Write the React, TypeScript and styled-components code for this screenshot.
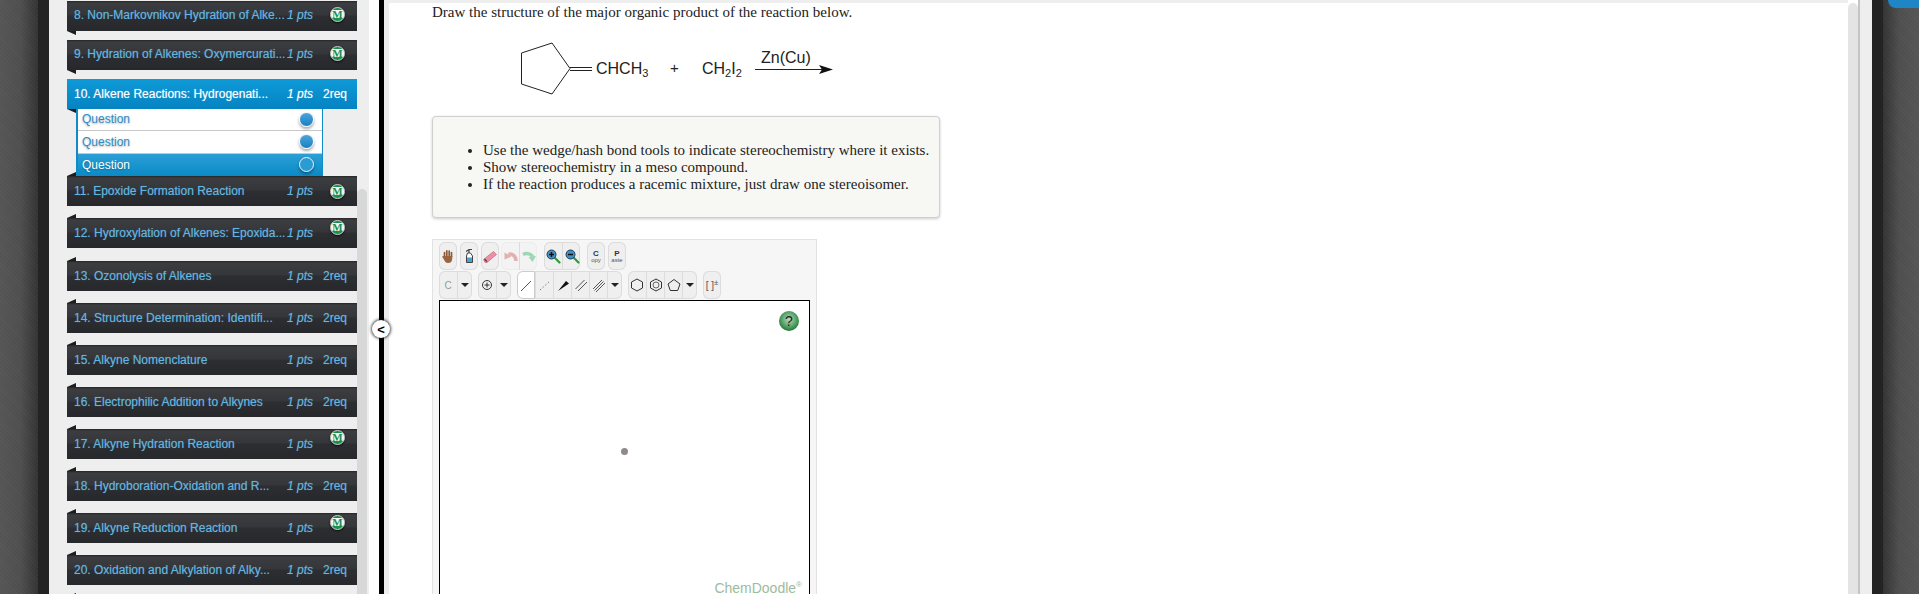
import { ReactNode } from "react"
import styled, { createGlobalStyle } from "styled-components"

const GlobalStyle = createGlobalStyle`
  html, body {
    margin: 0;
    padding: 0;
    height: 594px;
    overflow: hidden;
    background: #fff;
  }
`

interface Topic {
  title: string
  tail: "M" | "req"
  flag?: "top" | "bottom"
  gap?: number
  badgeLift?: number
}

const before: Topic[] = [
  { title: "8. Non-Markovnikov Hydration of Alke...", tail: "M", flag: "bottom", gap: 0, badgeLift: 2 },
  { title: "9. Hydration of Alkenes: Oxymercurati...", tail: "M", flag: "bottom", gap: 9, badgeLift: 2 },
]

const after: Topic[] = [
  { title: "11. Epoxide Formation Reaction", tail: "M", gap: 0, badgeLift: 0 },
  { title: "12. Hydroxylation of Alkenes: Epoxida...", tail: "M", gap: 12, badgeLift: 12 },
  { title: "13. Ozonolysis of Alkenes", tail: "req", gap: 13 },
  { title: "14. Structure Determination: Identifi...", tail: "req", gap: 12 },
  { title: "15. Alkyne Nomenclature", tail: "req", gap: 12 },
  { title: "16. Electrophilic Addition to Alkynes", tail: "req", gap: 12 },
  { title: "17. Alkyne Hydration Reaction", tail: "M", gap: 12, badgeLift: 14 },
  { title: "18. Hydroboration-Oxidation and R...", tail: "req", gap: 12 },
  { title: "19. Alkyne Reduction Reaction", tail: "M", gap: 12, badgeLift: 12 },
  { title: "20. Oxidation and Alkylation of Alky...", tail: "req", gap: 12 },
]

const Page = styled.div`
  display: flex;
  width: 1919px;
  height: 594px;
  overflow: hidden;
  position: relative;
  font-family: "Liberation Sans", Arial, sans-serif;
`

const Texture = styled.div<{ $side: "left" | "right" }>`
  flex: none;
  width: ${(p) => (p.$side === "left" ? 38 : 36)}px;
  position: relative;
  background:
    repeating-linear-gradient(45deg, rgba(255, 255, 255, 0.025) 0 1px, transparent 1px 3px),
    linear-gradient(
      ${(p) => (p.$side === "left" ? "to right" : "to left")},
      #555 0%,
      #4e4e4e 55%,
      #333 100%
    );
`

const DarkEdge = styled.div`
  flex: none;
  width: 11px;
  background: #232323;
`

const Sidebar = styled.aside`
  flex: none;
  width: 320px;
  position: relative;
  background: #eee;
  padding: 1px 12px 0 18px;
  box-sizing: border-box;
  overflow: hidden;
`

const ScrollThumb = styled.div`
  position: absolute;
  left: 308px;
  top: 189px;
  bottom: 0;
  width: 10px;
  background: #d8d8d8;
  border-radius: 5px 5px 0 0;
`

const TopicBar = styled.div<{ $active?: boolean; $gap: number; $flag?: "top" | "bottom" }>`
  position: relative;
  z-index: 1;
  display: flex;
  align-items: center;
  height: 30px;
  margin-top: ${(p) => p.$gap}px;
  padding: 0 0 ${(p) => (p.$flag === "bottom" ? 2 : 0)}px 7px;
  box-sizing: border-box;
  font-size: 12px;
  color: ${(p) => (p.$active ? "#fff" : "#62b6e2")};
  text-shadow: 0 0 1px ${(p) => (p.$active ? "rgba(255,255,255,0.5)" : "rgba(98,182,226,0.5)")};
  background: ${(p) =>
    p.$active
      ? "linear-gradient(#0f9ad8, #0583c1)"
      : "linear-gradient(#242527 0, #3c3d40 2px, #353639 14px, #2d2e31 15px, #27282b 100%)"};

  &::before {
    content: "";
    display: ${(p) => (p.$flag ? "block" : "none")};
    position: absolute;
    left: 0;
    width: 9px;
    height: 4px;
    background: #1d1d1f;
    ${(p) =>
      p.$flag === "top"
        ? "top: -4px; clip-path: polygon(0 100%, 100% 0, 100% 100%);"
        : "bottom: -4px; clip-path: polygon(0 0, 100% 0, 100% 100%);"}
  }
`

const TopicTitle = styled.span`
  flex: none;
  width: 213px;
  white-space: nowrap;
`

const Pts = styled.span`
  flex: none;
  width: 36px;
  font-style: italic;
`

const Req = styled.span`
  flex: none;
`

const SubList = styled.div`
  position: relative;
  margin: 0 34px 0 9px;
  background: #0d8cc6;
  border-left: 2px solid #0d8cc6;
  border-right: 1px solid #0d8cc6;
  &::before {
    content: "";
    position: absolute;
    left: -11px;
    top: 0;
    width: 9px;
    height: 4px;
    background: #1d1d1f;
    clip-path: polygon(0 0, 100% 0, 100% 100%);
  }
  &::after {
    content: "";
    position: absolute;
    left: -11px;
    bottom: 0;
    width: 9px;
    height: 4px;
    background: #1d1d1f;
    clip-path: polygon(0 100%, 100% 0, 100% 100%);
  }
`

const SubRow = styled.div<{ $current?: boolean; $h: number }>`
  display: flex;
  align-items: center;
  justify-content: space-between;
  height: ${(p) => p.$h}px;
  padding: 0 8px 1px 4px;
  box-sizing: border-box;
  font-size: 12px;
  color: ${(p) => (p.$current ? "#fff" : "#2c8fc9")};
  text-shadow: 0 1px 2px rgba(0, 0, 0, 0.3);
  background: ${(p) => (p.$current ? "linear-gradient(#2c9fd6, #0a8ac6)" : "#fff")};
  border-bottom: ${(p) => (p.$current ? "0" : "1px solid #c8c8c8")};
`

const SubDot = styled.span<{ $current?: boolean }>`
  width: 15px;
  height: 15px;
  border-radius: 50%;
  box-sizing: border-box;
  border: 1px solid #eef6fa;
  background: ${(p) => (p.$current ? "#2a9bd3" : "linear-gradient(#4aa5dc, #1a80c4)")};
  box-shadow: 0 2px 3px rgba(0, 0, 0, 0.35);
`

const MBadge = styled.span<{ $lift: number }>`
  flex: none;
  margin-left: 7px;
  margin-bottom: ${(p) => p.$lift}px;
  width: 15px;
  height: 15px;
  border-radius: 50%;
  display: flex;
  align-items: center;
  justify-content: center;
  background: linear-gradient(#1b8a4f 0, #1b8a4f 18%, #f2f7f3 19%, #f2f7f3 76%, #17924f 77%);
  border: 1px solid #cfcfcf;
  box-sizing: border-box;
  box-shadow: 0 1px 2px rgba(0, 0, 0, 0.7);
  font-family: "Liberation Serif", serif;
  font-weight: bold;
  font-size: 11px;
  line-height: 13px;
  color: #1b8a4f;
  text-shadow: none;
`

const Divider = styled.div`
  flex: none;
  width: 20px;
  display: flex;
  background: #fff;
`

const Rule = styled.div`
  flex: none;
  width: 5px;
  margin-left: 10px;
  background: #000;
`

const RuleSide = styled.div`
  flex: none;
  width: 5px;
  background: #eee;
`

const CollapseKnob = styled.div`
  position: absolute;
  left: 372px;
  top: 320px;
  width: 18px;
  height: 18px;
  border-radius: 50%;
  background: #fff;
  box-shadow: 0 0 3px 1px rgba(0, 0, 0, 0.7);
  display: flex;
  align-items: center;
  justify-content: center;
  font-size: 13px;
  font-weight: bold;
  color: #000;
  z-index: 2;
`

const Main = styled.main`
  flex: none;
  width: 1459px;
  border-top: 3px solid #eee;
  box-sizing: border-box;
  background: #fff;
  padding: 0 0 0 43px;
  font-family: "Liberation Serif", "Times New Roman", serif;
  font-size: 15px;
  color: #222;
  overflow: hidden;
`

const Prompt = styled.p`
  margin: 2px 0 0;
  line-height: 15px;
`

const Reaction = styled.svg`
  display: block;
  margin: 17px 0 0 80px;
`

const HintBox = styled.div`
  width: 508px;
  height: 102px;
  margin-top: 11px;
  box-sizing: border-box;
  padding: 25px 8px 0 0;
  background: #f7f8f3;
  border: 1px solid #d0d0d0;
  border-radius: 4px;
  box-shadow: 0 1px 3px rgba(0, 0, 0, 0.2);
`

const HintList = styled.ul`
  margin: 0;
  padding-left: 50px;
  line-height: 17px;
  white-space: nowrap;
`

const Sketcher = styled.div`
  width: 385px;
  height: 360px;
  margin-top: 21px;
  padding: 2px 6px 0 6px;
  box-sizing: border-box;
  background: #f6f6f6;
  border: 1px solid #e2e2e2;
`

const ToolRow = styled.div`
  display: flex;
  height: 29px;
  gap: 6px;
`

const ToolGroup = styled.div<{ $gap?: number; $dim?: boolean }>`
  display: flex;
  height: 28px;
  margin-right: ${(p) => (p.$gap !== undefined ? p.$gap - 6 : 0)}px;
  box-shadow: inset 0 0 0 1px ${(p) => (p.$dim ? "#ececec" : "#dcdcdc")};
  border-radius: 6px;
  background: ${(p) => (p.$dim ? "#f3f3f3" : "#efefef")};
  overflow: hidden;
`

const ToolButton = styled.div<{ $narrow?: boolean; $on?: boolean; $plain?: boolean }>`
  width: ${(p) => (p.$narrow ? 15 : 18)}px;
  display: flex;
  align-items: center;
  justify-content: center;
  box-sizing: border-box;
  background: ${(p) => (p.$on ? "#fff" : "transparent")};
  border: ${(p) => (p.$on ? "1px solid #ccc" : "0")};
  border-radius: ${(p) => (p.$on ? "6px 0 0 6px" : "0")};
  & + & {
    border-left: ${(p) => (p.$plain ? "0" : "1px solid #dcdcdc")};
  }
`

const CopyLabel = styled.span`
  font-family: "Liberation Sans", sans-serif;
  font-size: 6px;
  line-height: 6px;
  color: #555;
  text-align: center;
  b {
    display: block;
    font-size: 8px;
    line-height: 7px;
    color: #333;
  }
`

const CarbonLabel = styled.span`
  font-family: "Liberation Sans", sans-serif;
  font-size: 10px;
  color: #999;
`

const BracketLabel = styled.span`
  font-family: "Liberation Sans", sans-serif;
  font-size: 10px;
  color: #555;
  white-space: nowrap;
  sup {
    font-size: 8px;
    line-height: 0;
  }
`

const Caret = styled.span`
  width: 0;
  height: 0;
  border-left: 4px solid transparent;
  border-right: 4px solid transparent;
  border-top: 4px solid #222;
`

const Canvas = styled.div`
  position: relative;
  width: 371px;
  height: 320px;
  box-sizing: border-box;
  background: #fff;
  border: 1px solid #000;
`

const HelpBadge = styled.div`
  position: absolute;
  right: 10px;
  top: 10px;
  width: 20px;
  height: 20px;
  border-radius: 50%;
  background: radial-gradient(circle at 50% 42%, #b5dcbd, #5ba56c 45%, #1a7030 80%);
  color: #1c1c1c;
  display: flex;
  align-items: center;
  justify-content: center;
  font-family: "Liberation Sans", sans-serif;
  font-size: 14px;
`

const CanvasDot = styled.div`
  position: absolute;
  left: 181px;
  top: 147px;
  width: 7px;
  height: 7px;
  border-radius: 50%;
  background: #918a8a;
`

const Watermark = styled.div`
  position: absolute;
  right: 7px;
  top: 279px;
  font-family: "Liberation Sans", sans-serif;
  font-size: 14px;
  color: #9dbb9d;
  sup {
    font-size: 8px;
    line-height: 0;
  }
`

const PageScroll = styled.div`
  flex: none;
  width: 10px;
  margin-top: 3px;
  background: #e4e4e4;
  border-radius: 5px 5px 0 0;
`

const PageEdge = styled.div`
  flex: none;
  width: 14px;
  background: #eee;
  border-left: 2px solid #c4c4c4;
  box-sizing: border-box;
`

const CornerTab = styled.div`
  position: absolute;
  right: 0;
  top: 0;
  width: 31px;
  height: 8px;
  background: #1f86c6;
  border-bottom-left-radius: 8px;
`

const TopicRow = ({ topic }: { topic: Topic }) => (
  <TopicBar $gap={topic.gap ?? 0} $flag={topic.flag ?? (topic.gap ? "top" : undefined)}>
    <TopicTitle>{topic.title}</TopicTitle>
    <Pts>1 pts</Pts>
    {topic.tail === "M" ? <MBadge $lift={topic.badgeLift ?? 0}>M</MBadge> : <Req>2req</Req>}
  </TopicBar>
)

const Icon = ({ children }: { children: ReactNode }) => (
  <svg width="16" height="16" viewBox="0 0 16 16" fill="none">
    {children}
  </svg>
)

const ReactionScheme = () => (
  <Reaction width="340" height="68" viewBox="512 36 340 68">
    <g stroke="#222" strokeWidth="1" fill="none">
      <polygon points="521.5,52 552,42 570,67.5 552,93 521.5,83" />
      <line x1="570" y1="66.5" x2="592" y2="66.5" />
      <line x1="570" y1="69.5" x2="592" y2="69.5" />
      <line x1="755" y1="68.5" x2="825" y2="68.5" />
    </g>
    <polygon points="819,64 833,68.5 819,73 822,68.5" fill="#111" />
    <g fontFamily="'Liberation Sans', Arial, sans-serif" fontSize="16" fill="#222">
      <text x="596" y="73">
        CHCH<tspan fontSize="11" dy="3">3</tspan>
      </text>
      <text x="670" y="72" fontSize="15">+</text>
      <text x="702" y="73">
        CH<tspan fontSize="11" dy="3">2</tspan>
        <tspan dy="-3">I</tspan>
        <tspan fontSize="11" dy="3">2</tspan>
      </text>
      <text x="761" y="62">Zn(Cu)</text>
    </g>
  </Reaction>
)

const Toolbar = () => (
  <>
    <ToolRow>
      <ToolGroup $gap={3}>
        <ToolButton>
          <Icon>
            <path d="M4.500 8V4.500M6.800 7.500V2.800M9.200 7.500V3M11.500 8V4.500" stroke="#8a5a3a" strokeWidth="1.700" strokeLinecap="round" />
            <path d="M3.500 8h9l-.5 4c-.3 2-1.500 3-4 3-2 0-3-1-3.500-2.500L2 8.500z" fill="#9a6440" />
          </Icon>
        </ToolButton>
      </ToolGroup>
      <ToolGroup $gap={3}>
        <ToolButton>
          <Icon>
            <path d="M5 3.500 8 1.500h3M8 1.500V5" stroke="#444" strokeWidth="1.200" />
            <path d="M6.500 5h3L11.500 8v6.500h-6V8z" fill="#fff" stroke="#444" />
            <rect x="6" y="9.500" width="5" height="4.500" fill="#4d9fd4" />
          </Icon>
        </ToolButton>
      </ToolGroup>
      <ToolGroup $gap={2}>
        <ToolButton>
          <Icon>
            <path d="M1.500 11.500 11.500 3.500l3 3-9.500 8H3z" fill="#ef8fa5" stroke="#b85a72" strokeWidth="0.600" />
            <path d="M2 11.500 4.500 14l1-.8L3 10.500z" fill="#444" />
          </Icon>
        </ToolButton>
      </ToolGroup>
      <ToolGroup $dim $gap={7}>
        <ToolButton $plain>
          <Icon>
            <path d="M14 13C14 8 10 5 6.500 6.500" stroke="#e2b0ae" strokeWidth="3.500" />
            <path d="M2.500 11.500 2.500 4.500 9.500 8.500z" fill="#e2b0ae" />
          </Icon>
        </ToolButton>
        <ToolButton $plain>
          <Icon>
            <path d="M2 6.500C6 4.500 11 6 11.500 9" stroke="#9fd6b4" strokeWidth="3.500" />
            <path d="M7.500 9 15 8 11.500 14z" fill="#9fd6b4" />
          </Icon>
        </ToolButton>
      </ToolGroup>
      <ToolGroup $gap={7}>
        <ToolButton>
          <Icon>
            <line x1="9.500" y1="9.500" x2="14.500" y2="14.500" stroke="#2d9a3f" strokeWidth="2.200" strokeLinecap="round" />
            <circle cx="6.500" cy="6.500" r="4.500" fill="#4a8fc4" stroke="#1c3e5c" />
            <path d="M4 6.500h5M6.500 4v5" stroke="#111" strokeWidth="1.500" />
          </Icon>
        </ToolButton>
        <ToolButton>
          <Icon>
            <line x1="9.500" y1="9.500" x2="14.500" y2="14.500" stroke="#2d9a3f" strokeWidth="2.200" strokeLinecap="round" />
            <circle cx="6.500" cy="6.500" r="4.500" fill="#4a8fc4" stroke="#1c3e5c" />
            <path d="M4 6.500h5" stroke="#111" strokeWidth="1.500" />
          </Icon>
        </ToolButton>
      </ToolGroup>
      <ToolGroup $gap={3}>
        <ToolButton>
          <CopyLabel>
            <b>C</b>opy
          </CopyLabel>
        </ToolButton>
      </ToolGroup>
      <ToolGroup>
        <ToolButton>
          <CopyLabel>
            <b>P</b>aste
          </CopyLabel>
        </ToolButton>
      </ToolGroup>
    </ToolRow>
    <ToolRow>
      <ToolGroup>
        <ToolButton>
          <CarbonLabel>C</CarbonLabel>
        </ToolButton>
        <ToolButton $narrow>
          <Caret />
        </ToolButton>
      </ToolGroup>
      <ToolGroup>
        <ToolButton>
          <Icon>
            <circle cx="8" cy="8" r="4.500" stroke="#333" />
            <path d="M5.500 8h5M8 5.500v5" stroke="#333" />
          </Icon>
        </ToolButton>
        <ToolButton $narrow>
          <Caret />
        </ToolButton>
      </ToolGroup>
      <ToolGroup>
        <ToolButton $on>
          <Icon>
            <line x1="3" y1="14" x2="13" y2="4" stroke="#555" />
          </Icon>
        </ToolButton>
        <ToolButton>
          <Icon>
            <line x1="3" y1="13" x2="13" y2="4" stroke="#777" strokeDasharray="1.500 2" />
          </Icon>
        </ToolButton>
        <ToolButton>
          <Icon>
            <polygon points="3,14 11,4 14,6.500" fill="#111" />
          </Icon>
        </ToolButton>
        <ToolButton>
          <Icon>
            <path d="M2.500 12 11.500 3M5 14l9-9" stroke="#555" />
          </Icon>
        </ToolButton>
        <ToolButton>
          <Icon>
            <path d="M2 12 11 3M3.500 13.500l9-9M5 15l9-9" stroke="#555" />
          </Icon>
        </ToolButton>
        <ToolButton $narrow>
          <Caret />
        </ToolButton>
      </ToolGroup>
      <ToolGroup>
        <ToolButton>
          <Icon>
            <polygon points="8,2 13.500,5 13.500,11 8,14 2.500,11 2.500,5" stroke="#333" />
          </Icon>
        </ToolButton>
        <ToolButton>
          <Icon>
            <polygon points="8,2 13.500,5 13.500,11 8,14 2.500,11 2.500,5" stroke="#333" />
            <circle cx="8" cy="8" r="3" stroke="#666" />
          </Icon>
        </ToolButton>
        <ToolButton>
          <Icon>
            <polygon points="8,2.500 14,7 11.700,13.500 4.300,13.500 2,7" stroke="#333" />
          </Icon>
        </ToolButton>
        <ToolButton $narrow>
          <Caret />
        </ToolButton>
      </ToolGroup>
      <ToolGroup>
        <ToolButton>
          <BracketLabel>
            [ ]<sup>±</sup>
          </BracketLabel>
        </ToolButton>
      </ToolGroup>
    </ToolRow>
  </>
)

export default function App() {
  return (
    <Page>
      <GlobalStyle />
      <Texture $side="left" />
      <DarkEdge />
      <Sidebar>
        <ScrollThumb />
        {before.map((t) => (
          <TopicRow key={t.title} topic={t} />
        ))}
        <TopicBar $active $gap={9}>
          <TopicTitle>10. Alkene Reactions: Hydrogenati...</TopicTitle>
          <Pts>1 pts</Pts>
          <Req>2req</Req>
        </TopicBar>
        <SubList>
          <SubRow $h={22}>
            Question
            <SubDot />
          </SubRow>
          <SubRow $h={23}>
            Question
            <SubDot />
          </SubRow>
          <SubRow $current $h={22}>
            Question
            <SubDot $current />
          </SubRow>
        </SubList>
        {after.map((t) => (
          <TopicRow key={t.title} topic={t} />
        ))}
        <TopicBar $gap={12} $flag="top" />
      </Sidebar>
      <Divider>
        <Rule />
        <RuleSide />
      </Divider>
      <CollapseKnob>&lt;</CollapseKnob>
      <Main>
        <Prompt>Draw the structure of the major organic product of the reaction below.</Prompt>
        <ReactionScheme />
        <HintBox>
          <HintList>
            <li>Use the wedge/hash bond tools to indicate stereochemistry where it exists.</li>
            <li>Show stereochemistry in a meso compound.</li>
            <li>If the reaction produces a racemic mixture, just draw one stereoisomer.</li>
          </HintList>
        </HintBox>
        <Sketcher>
          <Toolbar />
          <Canvas>
            <HelpBadge>?</HelpBadge>
            <CanvasDot />
            <Watermark>
              ChemDoodle<sup>®</sup>
            </Watermark>
          </Canvas>
        </Sketcher>
      </Main>
      <PageScroll />
      <PageEdge />
      <DarkEdge />
      <Texture $side="right">
        <CornerTab />
      </Texture>
    </Page>
  )
}
